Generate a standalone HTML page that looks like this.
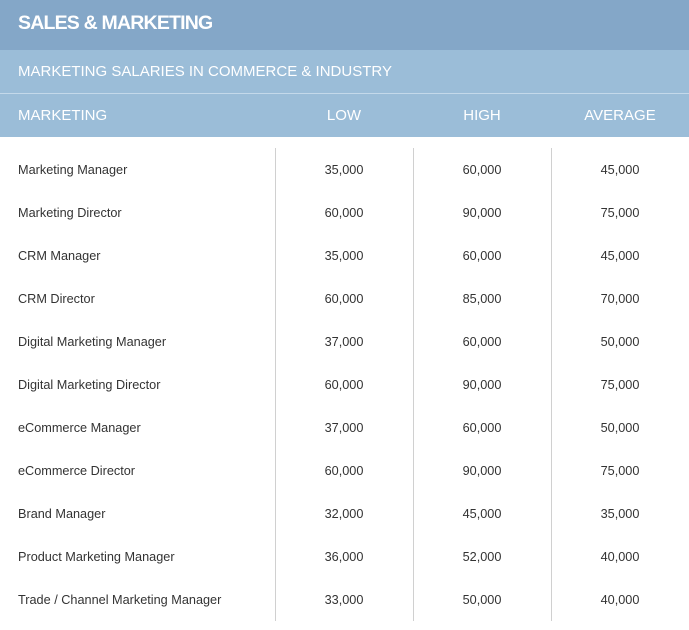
<!DOCTYPE html><html><head><style>
body{margin:0;width:689px;height:630px;background:#fff;font-family:"Liberation Sans",sans-serif;position:relative;overflow:hidden}
.h1{position:absolute;left:0;top:0;width:689px;height:50px;background:#84a7c8;color:#fff;font-weight:bold;font-size:19.5px;line-height:47px;padding-left:18px;box-sizing:border-box;letter-spacing:-0.8px}
.h2{position:absolute;left:0;top:50px;width:689px;height:43px;background:#9bbdd8;color:#fff;font-size:15px;line-height:44px;padding-left:18px;box-sizing:border-box}
.h3{position:absolute;left:0;top:94px;width:689px;height:43px;background:#9bbdd8;color:#fff;font-size:15px;line-height:44px}
.sep{position:absolute;left:0;top:93px;width:689px;height:1px;background:#c4d9ea}
.v{position:absolute;top:148px;height:473px;width:1px;background:#d0d0d0}
.r{position:absolute;left:0;width:689px;height:20px;font-size:12.7px;color:#333;line-height:22px}
.r span,.h3 span{position:absolute}
.c{width:120px;text-align:center}
</style></head><body>
<div class="h1">SALES &amp; MARKETING</div>
<div class="h2">MARKETING SALARIES IN COMMERCE &amp; INDUSTRY</div>
<div class="sep"></div>
<div class="h3"><span style="left:18px">MARKETING</span><span class="c" style="left:284px">LOW</span><span class="c" style="left:422px">HIGH</span><span class="c" style="left:560px">AVERAGE</span></div>
<div class="v" style="left:275px"></div><div class="v" style="left:413px"></div><div class="v" style="left:551px"></div>
<div class="r" style="top:159px"><span style="left:18px">Marketing Manager</span><span class="c" style="left:284px">35,000</span><span class="c" style="left:422px">60,000</span><span class="c" style="left:560px">45,000</span></div>
<div class="r" style="top:202px"><span style="left:18px">Marketing Director</span><span class="c" style="left:284px">60,000</span><span class="c" style="left:422px">90,000</span><span class="c" style="left:560px">75,000</span></div>
<div class="r" style="top:245px"><span style="left:18px">CRM Manager</span><span class="c" style="left:284px">35,000</span><span class="c" style="left:422px">60,000</span><span class="c" style="left:560px">45,000</span></div>
<div class="r" style="top:288px"><span style="left:18px">CRM Director</span><span class="c" style="left:284px">60,000</span><span class="c" style="left:422px">85,000</span><span class="c" style="left:560px">70,000</span></div>
<div class="r" style="top:331px"><span style="left:18px">Digital Marketing Manager</span><span class="c" style="left:284px">37,000</span><span class="c" style="left:422px">60,000</span><span class="c" style="left:560px">50,000</span></div>
<div class="r" style="top:374px"><span style="left:18px">Digital Marketing Director</span><span class="c" style="left:284px">60,000</span><span class="c" style="left:422px">90,000</span><span class="c" style="left:560px">75,000</span></div>
<div class="r" style="top:417px"><span style="left:18px">eCommerce Manager</span><span class="c" style="left:284px">37,000</span><span class="c" style="left:422px">60,000</span><span class="c" style="left:560px">50,000</span></div>
<div class="r" style="top:460px"><span style="left:18px">eCommerce Director</span><span class="c" style="left:284px">60,000</span><span class="c" style="left:422px">90,000</span><span class="c" style="left:560px">75,000</span></div>
<div class="r" style="top:503px"><span style="left:18px">Brand Manager</span><span class="c" style="left:284px">32,000</span><span class="c" style="left:422px">45,000</span><span class="c" style="left:560px">35,000</span></div>
<div class="r" style="top:546px"><span style="left:18px">Product Marketing Manager</span><span class="c" style="left:284px">36,000</span><span class="c" style="left:422px">52,000</span><span class="c" style="left:560px">40,000</span></div>
<div class="r" style="top:589px"><span style="left:18px">Trade / Channel Marketing Manager</span><span class="c" style="left:284px">33,000</span><span class="c" style="left:422px">50,000</span><span class="c" style="left:560px">40,000</span></div>
</body></html>
